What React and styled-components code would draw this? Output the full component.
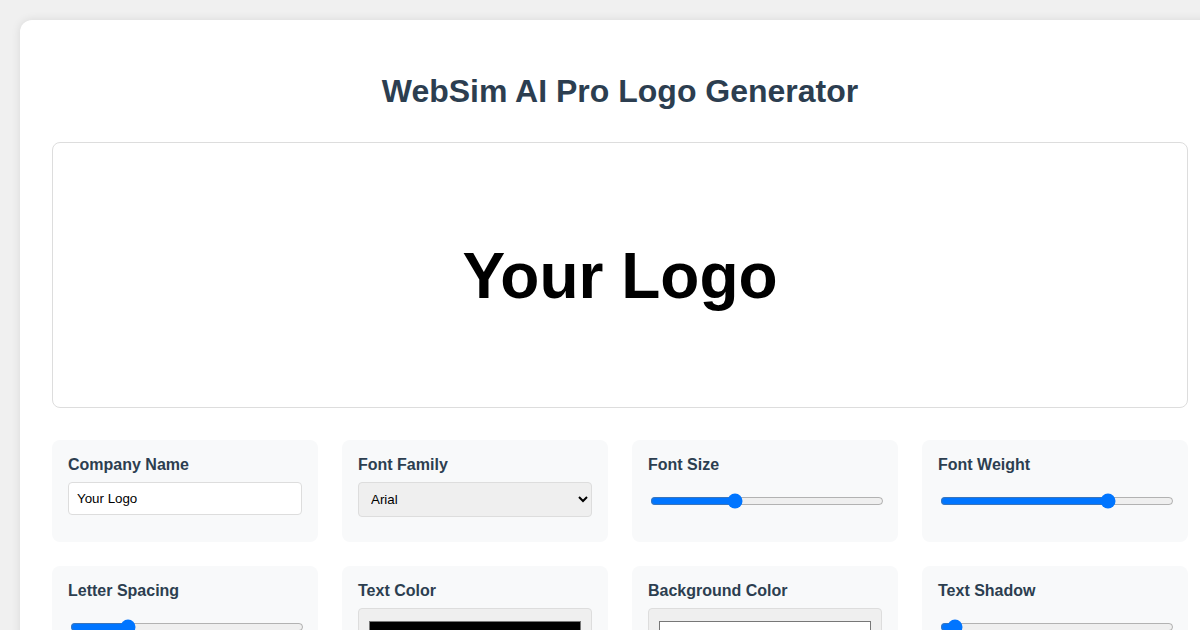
import React, { useState } from "react";
import styled, { createGlobalStyle } from "styled-components";

const GlobalStyle = createGlobalStyle`
  html, body {
    margin: 0;
    overflow: hidden;
  }
  body {
    padding: 20px;
    background: #f0f0f0;
    font-family: "Liberation Sans", Arial, sans-serif;
  }
  * {
    box-sizing: border-box;
  }
`;

export default function App() {
  const [name, setName] = useState("Your Logo");
  const [font, setFont] = useState("Arial");
  const [size, setSize] = useState(64);
  const [weight, setWeight] = useState(700);
  const [spacing, setSpacing] = useState(0);
  const [color, setColor] = useState("#000000");
  const [bg, setBg] = useState("#ffffff");
  const [shadow, setShadow] = useState(0);

  return (
    <>
      <GlobalStyle />
      <Card>
        <Title>WebSim AI Pro Logo Generator</Title>
        <Preview $bg={bg}>
          <LogoText
            style={{
              fontSize: size + "px",
              fontWeight: weight,
              letterSpacing: spacing + "px",
              color: color,
              textShadow: shadow > 0 ? `${shadow}px ${shadow}px ${shadow * 2}px rgba(0,0,0,0.3)` : "none",
            }}
          >
            {name}
          </LogoText>
        </Preview>
        <Controls>
          <ControlGroup>
            <Label>Company Name</Label>
            <TextInput value={name} onChange={(e) => setName(e.target.value)} />
          </ControlGroup>
          <ControlGroup>
            <Label>Font Family</Label>
            <Select value={font} onChange={(e) => setFont(e.target.value)}>
              <option>Arial</option>
              <option>Helvetica</option>
              <option>Times New Roman</option>
              <option>Courier New</option>
              <option>Georgia</option>
              <option>Verdana</option>
            </Select>
          </ControlGroup>
          <ControlGroup>
            <Label>Font Size</Label>
            <Range min={12} max={160} value={size} onChange={(e) => setSize(+e.target.value)} />
          </ControlGroup>
          <ControlGroup>
            <Label>Font Weight</Label>
            <Range min={100} max={920} step={10} value={weight} onChange={(e) => setWeight(+e.target.value)} />
          </ControlGroup>
          <ControlGroup>
            <Label>Letter Spacing</Label>
            <Range min={-3} max={10} value={spacing} onChange={(e) => setSpacing(+e.target.value)} />
          </ControlGroup>
          <ControlGroup>
            <Label>Text Color</Label>
            <ColorInput type="color" value={color} onChange={(e) => setColor(e.target.value)} />
          </ControlGroup>
          <ControlGroup>
            <Label>Background Color</Label>
            <ColorInput type="color" value={bg} onChange={(e) => setBg(e.target.value)} />
          </ControlGroup>
          <ControlGroup>
            <Label>Text Shadow</Label>
            <Range min={-1} max={29} value={shadow} onChange={(e) => setShadow(+e.target.value)} />
          </ControlGroup>
        </Controls>
      </Card>
    </>
  );
}

const Card = styled.div`
  width: 1200px;
  background: #ffffff;
  border-radius: 12px;
  padding: 32px;
  box-shadow: 0 0 10px rgba(0, 0, 0, 0.1);
`;

const Title = styled.h1`
  margin: 21px 0 32px;
  text-align: center;
  font-size: 32px;
  font-weight: bold;
  color: #2c3e50;
  line-height: 37px;
`;

const Preview = styled.div`
  min-height: 266px;
  padding-top: 3px;
  border: 1px solid #dddddd;
  border-radius: 8px;
  background: ${(p) => p.$bg};
  display: flex;
  align-items: center;
  justify-content: center;
  margin-bottom: 32px;
`;

const LogoText = styled.div`
  font-family: "Liberation Sans", Arial, sans-serif;
  line-height: 1.15;
`;

const Controls = styled.div`
  display: grid;
  grid-template-columns: repeat(4, 1fr);
  gap: 24px;
`;

const ControlGroup = styled.div`
  background: #f8f9fa;
  border-radius: 8px;
  padding: 16px;
  min-height: 102px;
`;

const Label = styled.label`
  display: block;
  font-size: 16px;
  font-weight: bold;
  color: #2c3e50;
  margin-bottom: 8px;
`;

const TextInput = styled.input`
  display: block;
  width: 100%;
  padding: 8px;
  border: 1px solid #dddddd;
  border-radius: 4px;
  font-family: "Liberation Sans", Arial, sans-serif;
  font-size: 13.33px;
  color: #000;
  background: #fff;
`;

const Select = styled.select`
  display: block;
  width: 100%;
  padding: 8px;
  border: 1px solid #dddddd;
  border-radius: 4px;
  font-family: "Liberation Sans", Arial, sans-serif;
  font-size: 13.33px;
  color: #000;
  background-color: #efefef;
`;

const Range = styled.input.attrs({ type: "range" })`
  display: block;
  width: 100%;
  margin: 19px 2px 10px;
  accent-color: #0075ff;
`;

const ColorInput = styled.input`
  display: block;
  width: 100%;
  height: 44px;
  padding: 8px;
  border: 1px solid #dddddd;
  border-radius: 4px;
  background: #efefef;
`;
